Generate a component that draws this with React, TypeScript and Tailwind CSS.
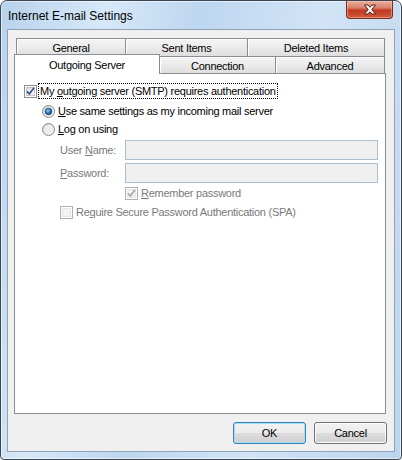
import React from "react";

const font = "font-['Liberation_Sans',Arial,sans-serif]";

function CheckBox({ checked, disabled }: { checked?: boolean; disabled?: boolean }) {
  return (
    <svg width="13" height="13" viewBox="0 0 13 13" className="shrink-0">
      <defs>
        <linearGradient id={disabled ? "cbd" : "cbn"} x1="0" y1="0" x2="1" y2="1">
          <stop offset="0" stopColor={disabled ? "#f4f4f4" : "#dcdcdc"} />
          <stop offset="1" stopColor={disabled ? "#f4f4f4" : "#fbfbfb"} />
        </linearGradient>
      </defs>
      <rect x="0.5" y="0.5" width="12" height="12" fill="#fff" stroke={disabled ? "#b1b1b1" : "#8e8f8f"} />
      <rect x="2.5" y="2.5" width="8" height="8" fill={`url(#${disabled ? "cbd" : "cbn"})`} stroke={disabled ? "#e6e6e6" : "#c6c6c6"} />
      {checked && (
        <path
          d="M3 6.4 L5.3 9 L10 2.8"
          fill="none"
          stroke={disabled ? "#a9a9a9" : "#3c5488"}
          strokeWidth="1.7"
          strokeLinejoin="round"
        />
      )}
    </svg>
  );
}

function Radio({ checked }: { checked?: boolean }) {
  return (
    <svg width="13" height="13" viewBox="0 0 13 13" className="shrink-0">
      <defs>
        <linearGradient id="rbg" x1="0" y1="0" x2="1" y2="1">
          <stop offset="0" stopColor="#d0d0d0" />
          <stop offset="1" stopColor="#fafafa" />
        </linearGradient>
        <radialGradient id="rdot" cx="0.4" cy="0.35" r="0.7">
          <stop offset="0" stopColor="#8fd0f8" />
          <stop offset="0.5" stopColor="#2d83c9" />
          <stop offset="1" stopColor="#0b3f79" />
        </radialGradient>
      </defs>
      <circle cx="6.5" cy="6.5" r="6" fill="url(#rbg)" stroke="#8a8a8a" />
      <circle cx="6.5" cy="6.5" r="4.2" fill="#eeeeee" />
      {checked && <circle cx="6.5" cy="6.5" r="3.3" fill="url(#rdot)" stroke="#1c3f6b" strokeWidth="0.8" />}
    </svg>
  );
}

function Tab({ label, width, first }: { label: string; width: string; first?: boolean }) {
  return (
    <div
      className={`${width} ${first ? "" : "-ml-[1px]"} h-full flex justify-center pt-[4px] border-t border-l border-r border-[#898c95] bg-[linear-gradient(#f5f5f5,#ebebeb_50%,#dedede)] text-[11px] text-black leading-none shadow-[inset_1px_1px_0_#fff]`}
    >
      {label}
    </div>
  );
}

function Key({ k }: { k: string }) {
  return <span className="underline underline-offset-1">{k}</span>;
}

export default function App() {
  return (
    <div className={`w-[402px] h-[460px] bg-white ${font} tracking-[-0.27px]`}>
      <div className="h-full flex flex-col rounded-t-[7px] rounded-b-[4px] border border-[#3c4652] bg-[linear-gradient(100deg,#b7d2ec_0%,#d7e8f8_22%,#bdd7f0_42%,#d2e4f6_68%,#bcd5ee_100%)] px-[6px] pb-[7px] shadow-[inset_0_0_0_1px_rgba(255,255,255,0.55)]">
        {/* Title bar */}
        <div className="h-[28px] flex items-start justify-between">
          <span className="ml-[1px] mt-[8px] text-[12px] leading-[14px] tracking-normal text-black">Internet E-mail Settings</span>
          <div className="mr-[2px] w-[47px] h-[18px] rounded-b-[4px] border border-t-0 border-[#7a2c1f] bg-[linear-gradient(#eab0a2,#d9806c_40%,#c2391f_55%,#cf5b3c)] shadow-[inset_0_0_0_1px_rgba(255,200,180,0.5)] flex items-center justify-center">
            <svg width="14" height="11" viewBox="0 0 14 11">
              <path
                d="M1.5 1 H5 L7 3.3 L9 1 H12.5 L8.8 5.5 L12.5 10 H9 L7 7.7 L5 10 H1.5 L5.2 5.5 Z"
                fill="#ffffff"
                stroke="#5a2218"
                strokeWidth="1"
                strokeLinejoin="round"
              />
            </svg>
          </div>
        </div>

        {/* Client area */}
        <div className="flex-1 bg-[#f0f0f0] border border-[#8ea1b6] flex flex-col pt-[8px]">
          <div className="ml-[6px] w-[372px] flex flex-col">
            {/* Top tab row */}
            <div className="h-[18px] flex pl-[2px]">
              <Tab label="General" width="w-[110px]" first />
              <Tab label="Sent Items" width="w-[123px]" />
              <Tab label="Deleted Items" width="w-[138px]" />
            </div>
            {/* Second tab row */}
            <div className="h-[17px] flex items-start pl-[2px]">
              <div className="relative z-10 -ml-[2px] -mt-[2px] w-[146px] h-[20px] border-t border-l border-r border-[#898c95] bg-white flex justify-center pt-[5px] text-[11px] leading-none text-black">
                Outgoing Server
              </div>
              <Tab label="Connection" width="w-[117px]" />
              <Tab label="Advanced" width="w-[110px]" />
            </div>

            {/* Panel */}
            <div className="h-[341px] border border-[#898c95] bg-white flex flex-col text-[11px] leading-none text-black">
              <div className="mt-[9px] h-[16px] ml-[9px] flex items-center">
                <CheckBox checked />
                <span className="ml-[1px] h-[16px] px-[1px] flex items-center border border-dotted border-black whitespace-pre">
                  My <Key k="o" />utgoing server (SMTP) requires authentication
                </span>
              </div>
              <div className="mt-[4px] h-[16px] ml-[27px] flex items-center gap-[3px]">
                <Radio checked />
                <span>
                  <Key k="U" />se same settings as my incoming mail server
                </span>
              </div>
              <div className="mt-[2px] h-[16px] ml-[27px] flex items-center gap-[3px]">
                <Radio />
                <span>
                  <Key k="L" />og on using
                </span>
              </div>
              <div className="mt-[3px] h-[20px] ml-[45px] flex items-center text-[#7a7a7a]">
                <span className="w-[65px] whitespace-pre">
                  User <Key k="N" />ame:
                </span>
                <div className="w-[253px] h-[20px] border border-[#abbdd2] bg-[#f0f0f0]" />
              </div>
              <div className="mt-[3px] h-[20px] ml-[45px] flex items-center text-[#7a7a7a]">
                <span className="w-[65px]">
                  <Key k="P" />assword:
                </span>
                <div className="w-[253px] h-[20px] border border-[#abbdd2] bg-[#f0f0f0]" />
              </div>
              <div className="mt-[2px] h-[16px] ml-[110px] flex items-center gap-[3px] text-[#7a7a7a]">
                <CheckBox checked disabled />
                <span>
                  <Key k="R" />emember password
                </span>
              </div>
              <div className="mt-[3px] h-[16px] ml-[45px] flex items-center gap-[3px] text-[#7a7a7a]">
                <CheckBox disabled />
                <span>
                  Re<Key k="q" />uire Secure Password Authentication (SPA)
                </span>
              </div>
            </div>
          </div>

          {/* Buttons */}
          <div className="mt-[8px] mr-[7px] flex justify-end gap-[8px]">
            <button className="w-[73px] h-[22px] rounded-[3px] border border-[#3c7fb1] bg-[linear-gradient(#f2f2f2,#ebebeb_50%,#dddddd_50%,#cfcfcf)] shadow-[inset_0_0_0_1px_#9fe1fa] text-[11px] leading-none text-black">
              OK
            </button>
            <button className="w-[73px] h-[22px] rounded-[3px] border border-[#707070] bg-[linear-gradient(#f2f2f2,#ebebeb_50%,#dddddd_50%,#cfcfcf)] shadow-[inset_0_0_0_1px_#fcfcfc] text-[11px] leading-none text-black">
              Cancel
            </button>
          </div>
        </div>
      </div>
    </div>
  );
}
